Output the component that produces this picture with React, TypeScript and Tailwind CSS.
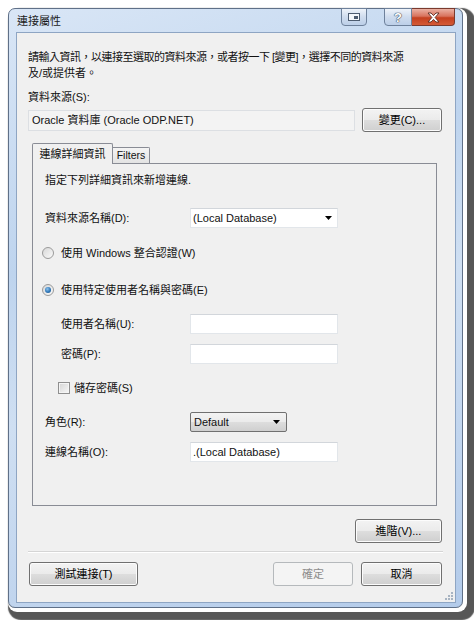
const font = "font-['Liberation_Sans','Noto_Sans_CJK_TC',sans-serif]";

function Btn({
  children,
  className = "",
  disabled = false,
}: {
  children: React.ReactNode;
  className?: string;
  disabled?: boolean;
}) {
  return (
    <div
      className={
        "h-[24px] rounded-[3px] border flex items-center justify-center text-[11px] " +
        (disabled
          ? "border-[#b5b9bc] bg-[#f4f4f4] text-[#8d8d8d] "
          : "border-[#707070] bg-[linear-gradient(#f3f3f3_0%,#ebebeb_48%,#dddddd_52%,#cfcfcf_100%)] text-black shadow-[inset_0_0_0_1px_#fcfcfc] ") +
        className
      }
    >
      {children}
    </div>
  );
}

function Arrow() {
  return (
    <svg width="7" height="4" viewBox="0 0 7 4">
      <path d="M0 0h7L3.5 4z" fill="#000" />
    </svg>
  );
}

function TextBox({ children, className = "" }: { children?: React.ReactNode; className?: string }) {
  return (
    <div
      className={
        "h-[20px] w-[148px] bg-white border border-[#e2e6ea] border-t-[#d2d6db] flex items-center px-[2px] text-[11px] " +
        className
      }
    >
      {children}
    </div>
  );
}

function Radio({ checked = false }: { checked?: boolean }) {
  return (
    <span className="w-[12px] h-[12px] rounded-full border border-[#9a9a9a] bg-[linear-gradient(135deg,#d8d8d8,#fafafa)] flex items-center justify-center shrink-0">
      {checked && (
        <span className="w-[6px] h-[6px] rounded-full bg-[radial-gradient(circle_at_40%_35%,#8fc4ee_0%,#2f77b8_55%,#1b4f83_100%)]" />
      )}
    </span>
  );
}

export default function App() {
  return (
    <div className={"w-[474px] h-[620px] bg-white overflow-hidden pl-[8px] pt-[8px] text-[#111] " + font}>
      {/* window */}
      <div className="w-[455px] h-[600px] rounded-[7px] border border-[#5f7088] bg-[linear-gradient(160deg,#d9e6f6_0%,#bed4ee_35%,#cfdff2_55%,#b3cbea_100%)] flex flex-col pl-[7px] pr-[6px] pb-[4px] shadow-[2px_2px_0_2px_#ffffff,6px_6px_1px_6px_#575757]">
        {/* title bar */}
        <div className="h-[23px] flex items-start shrink-0">
          <span className="pt-[4px] pl-[1px] text-[11px] text-[#1a1a1a]">連接屬性</span>
          <div className="ml-auto flex items-start -mt-px mr-px">
            <div className="w-[26px] h-[18px] mr-[17px] rounded-b-[4px] border border-[#6e819b] bg-[linear-gradient(#eef3fa,#cfdcee_50%,#bccfe8)] flex items-center justify-center">
              <svg width="12" height="8" viewBox="0 0 12 8">
                <rect x="0.5" y="0.5" width="11" height="7" fill="#f4f7fb" stroke="#4d5c70" />
                <rect x="6" y="3" width="4" height="3" fill="#4d5c70" />
              </svg>
            </div>
            <div className="w-[28px] h-[18px] rounded-bl-[4px] border border-[#6e819b] bg-[linear-gradient(#eef3fa,#cfdcee_50%,#bccfe8)] flex items-center justify-center">
              <span className="text-[13px] font-bold leading-none text-white [text-shadow:0_0_1px_#3c4a5c,0_0_1px_#3c4a5c,0_0_1px_#3c4a5c]">?</span>
            </div>
            <div className="w-[43px] h-[18px] rounded-br-[4px] border border-l-0 border-[#7a3a2e] bg-[linear-gradient(#eab1a3_0%,#d8735d_45%,#c4401f_55%,#d45a36_100%)] flex items-center justify-center">
              <svg width="13" height="11" viewBox="0 0 13 11">
                <path
                  d="M1 1h3l2.5 2.6L9 1h3L8.1 5.5 12 10H9L6.5 7.4 4 10H1l3.9-4.5z"
                  fill="#ffffff"
                  stroke="#5a2a20"
                  strokeWidth="0.9"
                  strokeLinejoin="round"
                />
              </svg>
            </div>
          </div>
        </div>

        {/* content */}
        <div className="flex-1 border border-[#8ea5c3] bg-[#f0f0f0] flex flex-col pl-[11px] pr-[12px] pt-[16px] text-[11px]">
          <p className="leading-[16px] whitespace-nowrap">
            <span className="tracking-[-0.5px]">請輸入資訊，以連接至選取的資料來源，或者按一下 [變更]，選擇不同的資料來源</span>
            <br />
            及/或提供者。
          </p>
          <p className="mt-[8px] leading-[16px]">資料來源(S):</p>

          <div className="mt-[3px] h-[24px] flex items-center">
            <div className="w-[327px] h-[21px] border border-[#dcdfe3] bg-[#f3f3f3] flex items-center pl-[3px]">
              Oracle 資料庫 (Oracle ODP.NET)
            </div>
            <Btn className="ml-[7px] w-[80px]">變更(C)...</Btn>
          </div>

          {/* tabs */}
          <div className="mt-[11px] ml-[4px] flex items-end h-[20px] relative z-10">
            <div className="w-[81px] h-[21px] -mb-px border border-b-0 border-[#898c95] bg-[#f0f0f0] rounded-t-[2px] flex items-center justify-center">
              連線詳細資訊
            </div>
            <div className="w-[38px] h-[16px] -ml-px border border-b-0 border-[#898c95] bg-[linear-gradient(#f4f4f4,#e3e3e3)] rounded-tr-[2px] flex items-center justify-center text-[10.5px]">
              Filters
            </div>
          </div>
          <div className="ml-[4px] w-[405px] h-[343px] border border-[#898c95] bg-[#f0f0f0] flex flex-col pl-[12px] pt-[8px]">
            <p className="leading-[16px]">指定下列詳細資訊來新增連線.</p>

            <div className="mt-[20px] h-[20px] flex items-center">
              <span className="w-[145px]">資料來源名稱(D):</span>
              <TextBox className="justify-between pr-[5px]">
                <span>(Local Database)</span>
                <Arrow />
              </TextBox>
            </div>

            <div className="mt-[17px] h-[16px] flex items-center -ml-[3px]">
              <Radio />
              <span className="ml-[7px]">使用 Windows 整合認證(W)</span>
            </div>

            <div className="mt-[21px] h-[16px] flex items-center -ml-[3px]">
              <Radio checked />
              <span className="ml-[7px]">使用特定使用者名稱與密碼(E)</span>
            </div>

            <div className="mt-[16px] h-[20px] flex items-center pl-[16px]">
              <span className="w-[129px]">使用者名稱(U):</span>
              <TextBox />
            </div>

            <div className="mt-[10px] h-[20px] flex items-center pl-[16px]">
              <span className="w-[129px]">密碼(P):</span>
              <TextBox />
            </div>

            <div className="mt-[16px] h-[16px] flex items-center pl-[13px]">
              <span className="w-[12px] h-[12px] border border-[#8f8f8f] bg-[linear-gradient(135deg,#d4d4d4,#f7f7f7)] shadow-[inset_0_0_0_1px_#f4f4f4]" />
              <span className="ml-[4px]">儲存密碼(S)</span>
            </div>

            <div className="mt-[16px] h-[20px] flex items-center">
              <span className="w-[145px]">角色(R):</span>
              <div className="w-[97px] h-[20px] rounded-[2px] border border-[#707070] bg-[linear-gradient(#f3f3f3_0%,#ebebeb_48%,#dddddd_52%,#cfcfcf_100%)] flex items-center justify-between pl-[3px] pr-[6px]">
                <span>Default</span>
                <Arrow />
              </div>
            </div>

            <div className="mt-[10px] h-[20px] flex items-center">
              <span className="w-[145px]">連線名稱(O):</span>
              <TextBox>.(Local Database)</TextBox>
            </div>
          </div>

          <div className="mt-[13px] flex justify-end pr-[1px]">
            <Btn className="w-[87px]">進階(V)...</Btn>
          </div>

          <div className="mt-[8px] h-[2px] border-t border-[#d5d5d5] border-b border-b-white" />

          <div className="mt-[9px] flex items-center pl-[1px] pr-[1px]">
            <Btn className="w-[109px]">測試連接(T)</Btn>
            <Btn disabled className="ml-auto w-[80px]">確定</Btn>
            <Btn className="ml-[8px] w-[81px]">取消</Btn>
          </div>

          <div className="mt-auto mb-[2px] -mr-[10px] flex justify-end">
            <svg width="8" height="8" viewBox="0 0 8 8">
              <g fill="#a8b4c2">
                <rect x="6" y="0" width="2" height="2" />
                <rect x="3" y="3" width="2" height="2" />
                <rect x="6" y="3" width="2" height="2" />
                <rect x="0" y="6" width="2" height="2" />
                <rect x="3" y="6" width="2" height="2" />
                <rect x="6" y="6" width="2" height="2" />
              </g>
            </svg>
          </div>
        </div>
      </div>
    </div>
  );
}
